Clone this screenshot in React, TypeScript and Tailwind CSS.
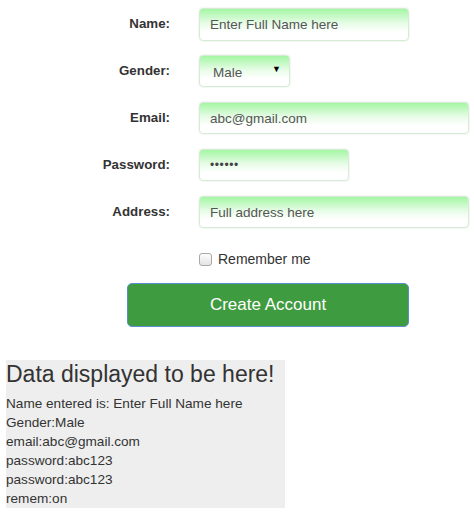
import React from "react";

const inputCls =
  "h-[32px] rounded-[4px] border border-[#d3ecd3] bg-[linear-gradient(to_bottom,#a4f6a4_0%,#e6fce6_45%,#ffffff_75%)] shadow-[0_0_2px_rgba(0,0,0,0.12)] px-[10px] text-[13.5px] text-[#555] outline-none flex items-center";

function Row({ label, children }: { label: string; children: React.ReactNode }) {
  return (
    <div className="flex items-center h-[32px]">
      <label className="w-[170px] text-right text-[13.3px] font-bold text-[#333] shrink-0">{label}</label>
      <div className="ml-[29px] flex items-center">{children}</div>
    </div>
  );
}

export default function App() {
  return (
    <div className="w-[474px] h-[512px] bg-white overflow-hidden" style={{ fontFamily: '"Liberation Sans", Arial, sans-serif' }}>
      <div className="pt-[8px] flex flex-col gap-[15px]">
        <Row label="Name:">
          <input
            readOnly
            placeholder="Enter Full Name here"
            className={`${inputCls} w-[210px] h-[33px] placeholder:text-[#555]`}
          />
        </Row>
        <Row label="Gender:">
          <div className={`${inputCls} w-[91px] h-[31px] justify-between pl-[13px] pr-[8px]`}>
            <span className="pt-[4px]">Male</span>
            <span className="text-[9px] text-black leading-none -mt-[3px]">▼</span>
          </div>
        </Row>
        <Row label="Email:">
          <input readOnly value="abc@gmail.com" className={`${inputCls} w-[270px]`} />
        </Row>
        <Row label="Password:">
          <div className={`${inputCls} w-[150px]`}>
            <span className="text-[12px] text-[#444] tracking-[0.6px]">••••••</span>
          </div>
        </Row>
        <Row label="Address:">
          <input
            readOnly
            placeholder="Full address here"
            className={`${inputCls} w-[270px] h-[31px] placeholder:text-[#555]`}
          />
        </Row>
      </div>

      <div className="mt-[21px] ml-[199px] h-[20px] flex items-center">
        <span className="w-[13px] h-[13px] rounded-[3px] border border-[#a9a9a9] bg-[linear-gradient(to_bottom,#fdfdfd,#e4e4e4)] shrink-0" />
        <span className="ml-[6px] text-[14px] text-[#333]">Remember me</span>
      </div>

      <div className="mt-[14px] ml-[127px]">
        <button className="w-[282px] h-[44px] rounded-[5px] bg-[#3f9b40] border border-[#5b8fd0] text-white text-[17px] flex items-center justify-center">
          Create Account
        </button>
      </div>

      <div className="mt-[33px] ml-[6px] w-[279px] h-[148px] bg-[#eeeeee] text-[#333]">
        <h1 className="text-[23px] leading-[28px] font-normal">Data displayed to be here!</h1>
        <div className="mt-[6px] text-[13.6px] leading-[19px]">
          <div>Name entered is: Enter Full Name here</div>
          <div>Gender:Male</div>
          <div>email:abc@gmail.com</div>
          <div>password:abc123</div>
          <div>password:abc123</div>
          <div>remem:on</div>
        </div>
      </div>
    </div>
  );
}
